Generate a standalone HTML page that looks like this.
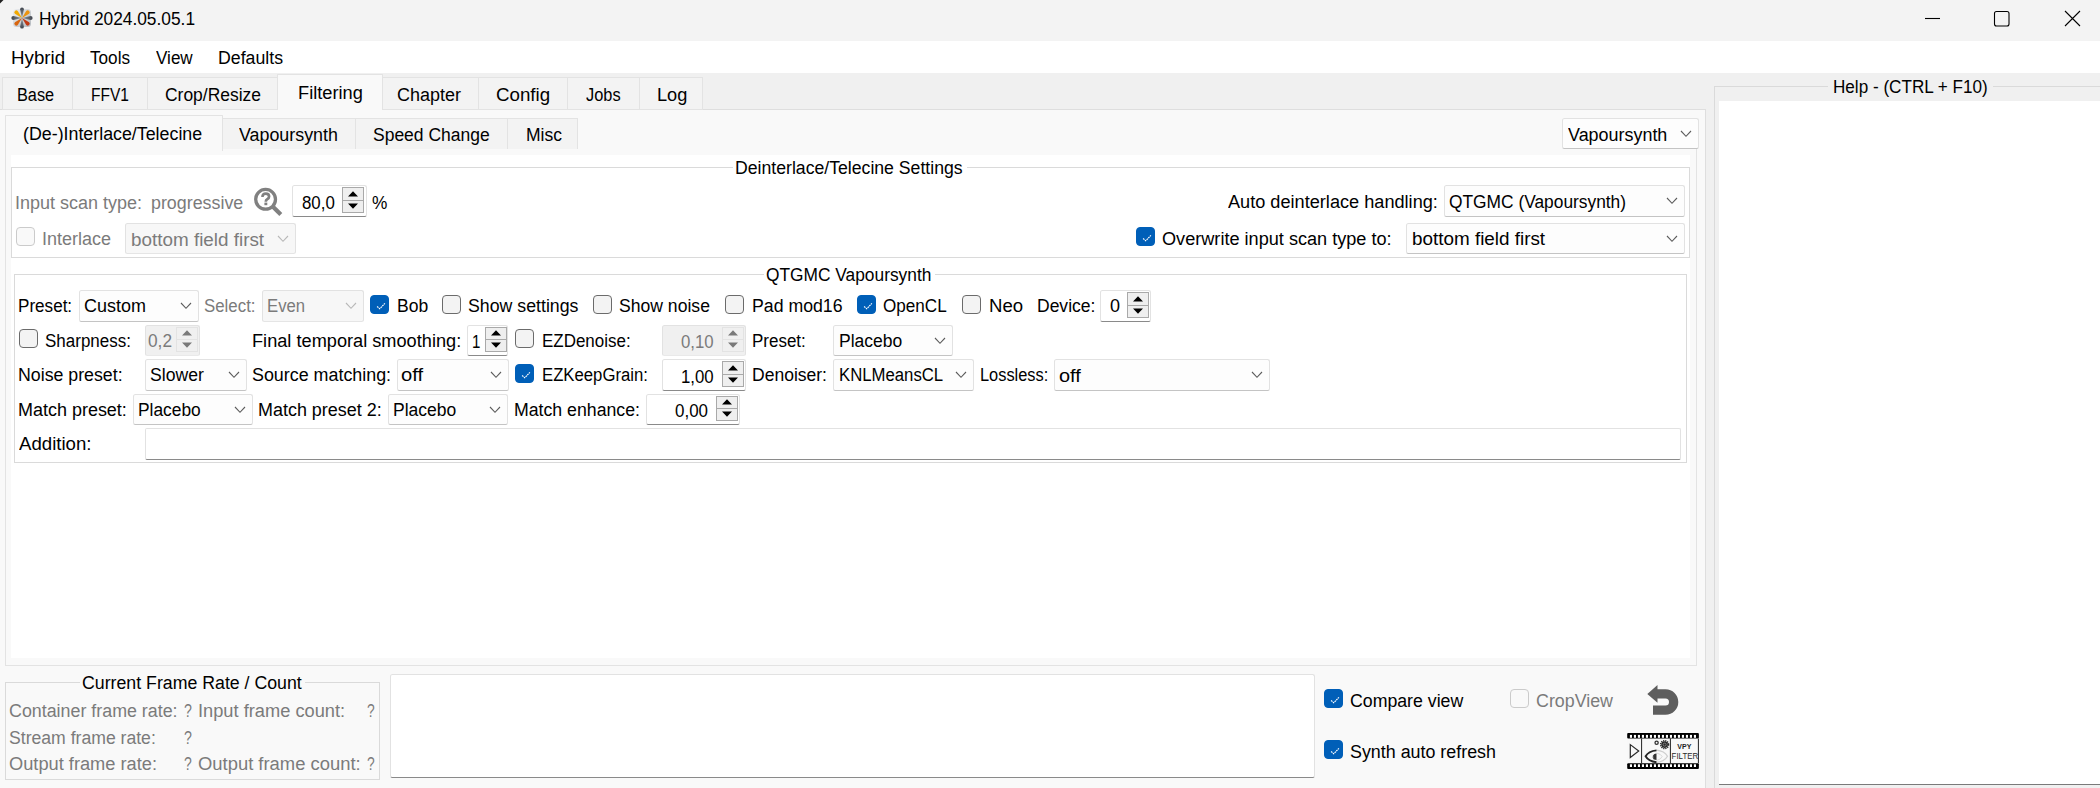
<!DOCTYPE html>
<html><head><meta charset="utf-8"><style>
html,body{margin:0;padding:0}
body{width:2100px;height:788px;overflow:hidden;position:relative;background:#f0f0f0;font-family:"Liberation Sans",sans-serif}
body>div,body>svg{position:absolute}
.t{white-space:nowrap;font-size:18px;line-height:20px;transform-origin:0 0}
.tab{box-sizing:border-box;background:#f3f3f3;border:1px solid #e3e3e3;border-bottom:none}
.tab.act{background:#f9f9f9;border-radius:1px 1px 0 0}
.cmb{box-sizing:border-box;border:1px solid #e2e2e2;border-radius:2.5px}
.cb{width:19px;height:19px;box-sizing:border-box;border:1px solid #6b6b6b;border-radius:4px;background:#f3f3f3}
.cb.on{background:#005fb8;border-color:#005fb8}
</style></head><body>
<div style="left:0px;top:0px;width:2100px;height:41px;background:#f3f3f3"></div>
<div style="left:0px;top:41px;width:2100px;height:32px;background:#ffffff"></div>
<svg style="position:absolute;left:1900px;top:0" width="200" height="41" viewBox="1900 0 200 41"><path d="M1925 18.5 H1940" stroke="#000" stroke-width="1.1"/><rect x="1994.5" y="11.5" width="14.5" height="14.5" rx="2" fill="none" stroke="#000" stroke-width="1.1"/><path d="M2065 11 L2080 26 M2080 11 L2065 26" stroke="#000" stroke-width="1.1"/></svg>
<svg style="position:absolute;left:10px;top:6px" width="24" height="24" viewBox="-12 -12 24 24"><defs><linearGradient id="sil" x1="0" y1="0" x2="1" y2="1"><stop offset="0" stop-color="#eceef0"/><stop offset="1" stop-color="#b4b9bf"/></linearGradient><linearGradient id="gp" x1="0" y1="1" x2="0" y2="0"><stop offset="0" stop-color="#9aa0a8"/><stop offset="1" stop-color="#3d424a"/></linearGradient></defs><rect x="-9" y="-9" width="18" height="18" rx="3.5" fill="url(#sil)"/><path d="M0 0 L-1.9 -8.7 A1.9 1.9 0 0 1 1.9 -8.7 Z" fill="url(#gp)" transform="rotate(0)"/><path d="M0 0 L-1.9 -8.7 A1.9 1.9 0 0 1 1.9 -8.7 Z" fill="url(#gp)" transform="rotate(90)"/><path d="M0 0 L-1.9 -8.7 A1.9 1.9 0 0 1 1.9 -8.7 Z" fill="url(#gp)" transform="rotate(180)"/><path d="M0 0 L-1.9 -8.7 A1.9 1.9 0 0 1 1.9 -8.7 Z" fill="url(#gp)" transform="rotate(270)"/><path d="M0 0 L-2.0 -8.0 A2.0 2.0 0 0 1 2.0 -8.0 Z" fill="#f2a900" transform="rotate(-45)"/><path d="M0 0 L-2.0 -8.0 A2.0 2.0 0 0 1 2.0 -8.0 Z" fill="#ec9410" transform="rotate(45)"/><path d="M0 0 L-2.0 -8.0 A2.0 2.0 0 0 1 2.0 -8.0 Z" fill="#d8650e" transform="rotate(-135)"/><path d="M0 0 L-2.0 -8.0 A2.0 2.0 0 0 1 2.0 -8.0 Z" fill="#c23a14" transform="rotate(135)"/></svg>
<svg style="position:absolute;left:0;top:0" width="5" height="5"><path d="M0 0 H3.5 L0 3.5 Z" fill="#222"/></svg>
<svg style="position:absolute;left:0;top:783px" width="5" height="5"><path d="M0 5 H3.5 L0 1.5 Z" fill="#444"/></svg>
<div style="left:-1px;top:109px;width:1707px;height:691px;background:#f9f9f9;border:1px solid #dedede;box-sizing:border-box"></div>
<div class="tab" style="left:2px;top:77px;width:71px;height:33px;border-bottom:1px solid #e3e3e3"></div>
<div class="tab" style="left:72px;top:77px;width:76px;height:33px;border-bottom:1px solid #e3e3e3"></div>
<div class="tab" style="left:147px;top:77px;width:131px;height:33px;border-bottom:1px solid #e3e3e3"></div>
<div class="tab" style="left:382px;top:77px;width:97px;height:33px;border-bottom:1px solid #e3e3e3"></div>
<div class="tab" style="left:478px;top:77px;width:90px;height:33px;border-bottom:1px solid #e3e3e3"></div>
<div class="tab" style="left:567px;top:77px;width:73px;height:33px;border-bottom:1px solid #e3e3e3"></div>
<div class="tab" style="left:639px;top:77px;width:64px;height:33px;border-bottom:1px solid #e3e3e3"></div>
<div class="tab act" style="left:277px;top:74px;width:106px;height:36px"></div>
<div style="left:1706px;top:73px;width:394px;height:715px;background:#f0f0f0"></div>
<div style="left:1714px;top:86px;width:396px;height:714px;box-sizing:border-box;border:1px solid #dadada;border-top:none;"></div>
<div style="left:1714px;top:86px;width:114px;height:1px;background:#dadada"></div>
<div style="left:1993px;top:86px;width:117px;height:1px;background:#dadada"></div>
<div style="left:1719px;top:101px;width:381px;height:684px;background:#ffffff;border-bottom:1px solid #7a7a7a;box-sizing:border-box"></div>
<div style="left:5px;top:149px;width:1692px;height:517px;background:#f9f9f9;border:1px solid #e3e3e3;border-top:none;box-sizing:border-box"></div>
<div class="tab" style="left:222px;top:118px;width:134px;height:31px"></div>
<div class="tab" style="left:355px;top:118px;width:153px;height:31px"></div>
<div class="tab" style="left:507px;top:118px;width:71px;height:31px"></div>
<div class="tab act" style="left:5px;top:115px;width:218px;height:36px"></div>
<div style="left:11px;top:155px;width:1679px;height:503px;background:#ffffff"></div>
<div class="cmb" style="left:1562px;top:118px;width:137px;height:31px;background:#fdfdfd;border-bottom-color:#c4c4c4"></div>
<svg width="12" height="8" viewBox="0 0 12 8" style="position:absolute;left:1679.5px;top:129.7px"><path d="M1 1 L6 6.3 L11 1" fill="none" stroke="#5c5c5c" stroke-width="1.1"/></svg>
<div style="left:11px;top:167px;width:1679px;height:91px;box-sizing:border-box;border:1px solid #dadada;border-top:none;"></div>
<div style="left:11px;top:167px;width:722px;height:1px;background:#dadada"></div>
<div style="left:967px;top:167px;width:723px;height:1px;background:#dadada"></div>
<div class="cmb" style="left:292px;top:185px;width:75px;height:32px;background:#ffffff;border-bottom-color:#8a8a8a"></div>
<div style="left:342px;top:187px;width:22px;height:26px;box-sizing:border-box;border:1px solid #a9a9a9;background:#efefef"></div>
<div style="left:342px;top:200.0px;width:22px;height:1px;background:#a9a9a9"></div>
<svg style="position:absolute;left:348.0px;top:191.0px" width="10" height="19" viewBox="0 0 10 19"><path d="M0 5.5 L5 0.2 L10 5.5 Z M0 12.5 L5 17.8 L10 12.5 Z" fill="#000"/></svg>
<svg style="position:absolute;left:252px;top:186px" width="32" height="32" viewBox="252 186 32 32"><circle cx="265.6" cy="199.3" r="9.9" fill="none" stroke="#808080" stroke-width="3.3"/><path d="M272.2 206 L280.8 214.6" stroke="#808080" stroke-width="4.2" stroke-linecap="butt"/><path d="M262.5 197 Q262.4 193.6 265.8 193.6 Q269.1 193.6 269.1 196.6 Q269.1 198.4 267.2 199.3 Q265.8 200 265.8 201.8" fill="none" stroke="#808080" stroke-width="2.7"/><rect x="264.4" y="202.6" width="2.9" height="2.6" fill="#808080"/></svg>
<div class="cb" style="left:16px;top:227px;width:19px;height:19px;border-color:#cbcbcb;background:#f9f9f9"></div>
<div class="cmb" style="left:125px;top:223px;width:171px;height:31px;background:#f7f7f7;border-bottom-color:#e5e5e5"></div>
<svg width="12" height="8" viewBox="0 0 12 8" style="position:absolute;left:276.5px;top:234.7px"><path d="M1 1 L6 6.3 L11 1" fill="none" stroke="#b8b8b8" stroke-width="1.1"/></svg>
<div class="cmb" style="left:1444px;top:185px;width:241px;height:32px;background:#fdfdfd;border-bottom-color:#c4c4c4"></div>
<svg width="12" height="8" viewBox="0 0 12 8" style="position:absolute;left:1665.5px;top:197.2px"><path d="M1 1 L6 6.3 L11 1" fill="none" stroke="#5c5c5c" stroke-width="1.1"/></svg>
<div class="cb on" style="left:1136px;top:227px;width:19px;height:19px"><svg width="19" height="19" viewBox="0 0 19 19" style="position:absolute;left:0;top:0"><path d="M6.1 10.5 L8.7 12.8 L13.9 7.3" fill="none" stroke="#fff" stroke-width="1.15" stroke-dasharray="1.8 0.6"/></svg></div>
<div class="cmb" style="left:1406px;top:223px;width:279px;height:31px;background:#fdfdfd;border-bottom-color:#c4c4c4"></div>
<svg width="12" height="8" viewBox="0 0 12 8" style="position:absolute;left:1665.5px;top:234.7px"><path d="M1 1 L6 6.3 L11 1" fill="none" stroke="#5c5c5c" stroke-width="1.1"/></svg>
<div style="left:14px;top:274px;width:1673px;height:189px;box-sizing:border-box;border:1px solid #dadada;border-top:none;"></div>
<div style="left:14px;top:274px;width:750px;height:1px;background:#dadada"></div>
<div style="left:935px;top:274px;width:752px;height:1px;background:#dadada"></div>
<div class="cmb" style="left:79px;top:290px;width:120px;height:32px;background:#fdfdfd;border-bottom-color:#c4c4c4"></div>
<svg width="12" height="8" viewBox="0 0 12 8" style="position:absolute;left:179.5px;top:302.2px"><path d="M1 1 L6 6.3 L11 1" fill="none" stroke="#5c5c5c" stroke-width="1.1"/></svg>
<div class="cmb" style="left:262px;top:290px;width:102px;height:32px;background:#f7f7f7;border-bottom-color:#e5e5e5"></div>
<svg width="12" height="8" viewBox="0 0 12 8" style="position:absolute;left:344.5px;top:302.2px"><path d="M1 1 L6 6.3 L11 1" fill="none" stroke="#b8b8b8" stroke-width="1.1"/></svg>
<div class="cb on" style="left:370px;top:295px;width:19px;height:19px"><svg width="19" height="19" viewBox="0 0 19 19" style="position:absolute;left:0;top:0"><path d="M6.1 10.5 L8.7 12.8 L13.9 7.3" fill="none" stroke="#fff" stroke-width="1.15" stroke-dasharray="1.8 0.6"/></svg></div>
<div class="cb" style="left:442px;top:295px;width:19px;height:19px;border-color:#6b6b6b;background:#f3f3f3"></div>
<div class="cb" style="left:593px;top:295px;width:19px;height:19px;border-color:#6b6b6b;background:#f3f3f3"></div>
<div class="cb" style="left:725px;top:295px;width:19px;height:19px;border-color:#6b6b6b;background:#f3f3f3"></div>
<div class="cb on" style="left:857px;top:295px;width:19px;height:19px"><svg width="19" height="19" viewBox="0 0 19 19" style="position:absolute;left:0;top:0"><path d="M6.1 10.5 L8.7 12.8 L13.9 7.3" fill="none" stroke="#fff" stroke-width="1.15" stroke-dasharray="1.8 0.6"/></svg></div>
<div class="cb" style="left:962px;top:295px;width:19px;height:19px;border-color:#6b6b6b;background:#f3f3f3"></div>
<div class="cmb" style="left:1100px;top:290px;width:51px;height:32px;background:#ffffff;border-bottom-color:#8a8a8a"></div>
<div style="left:1127px;top:292px;width:22px;height:26px;box-sizing:border-box;border:1px solid #a9a9a9;background:#efefef"></div>
<div style="left:1127px;top:305.0px;width:22px;height:1px;background:#a9a9a9"></div>
<svg style="position:absolute;left:1133.0px;top:296.0px" width="10" height="19" viewBox="0 0 10 19"><path d="M0 5.5 L5 0.2 L10 5.5 Z M0 12.5 L5 17.8 L10 12.5 Z" fill="#000"/></svg>
<div class="cb" style="left:19px;top:329px;width:19px;height:19px;border-color:#6b6b6b;background:#f3f3f3"></div>
<div class="cmb" style="left:145px;top:325px;width:55px;height:31px;background:#f0f0f0;border-bottom-color:#e9e9e9"></div>
<div style="left:176px;top:327px;width:22px;height:25px;box-sizing:border-box;border:1px solid #e3e3e3;background:#f0f0f0"></div>
<div style="left:176px;top:339.0px;width:22px;height:1px;background:#e3e3e3"></div>
<svg style="position:absolute;left:182.0px;top:330.0px" width="10" height="19" viewBox="0 0 10 19"><path d="M0 5.5 L5 0.2 L10 5.5 Z M0 12.5 L5 17.8 L10 12.5 Z" fill="#7a7a7a"/></svg>
<div class="cmb" style="left:467px;top:325px;width:41px;height:31px;background:#ffffff;border-bottom-color:#8a8a8a"></div>
<div style="left:485px;top:327px;width:22px;height:25px;box-sizing:border-box;border:1px solid #a9a9a9;background:#efefef"></div>
<div style="left:485px;top:339.0px;width:22px;height:1px;background:#a9a9a9"></div>
<svg style="position:absolute;left:491.0px;top:330.0px" width="10" height="19" viewBox="0 0 10 19"><path d="M0 5.5 L5 0.2 L10 5.5 Z M0 12.5 L5 17.8 L10 12.5 Z" fill="#000"/></svg>
<div class="cb" style="left:515px;top:329px;width:19px;height:19px;border-color:#6b6b6b;background:#f3f3f3"></div>
<div class="cmb" style="left:662px;top:325px;width:84px;height:31px;background:#f0f0f0;border-bottom-color:#e9e9e9"></div>
<div style="left:722px;top:327px;width:22px;height:25px;box-sizing:border-box;border:1px solid #e3e3e3;background:#f0f0f0"></div>
<div style="left:722px;top:339.0px;width:22px;height:1px;background:#e3e3e3"></div>
<svg style="position:absolute;left:728.0px;top:330.0px" width="10" height="19" viewBox="0 0 10 19"><path d="M0 5.5 L5 0.2 L10 5.5 Z M0 12.5 L5 17.8 L10 12.5 Z" fill="#7a7a7a"/></svg>
<div class="cmb" style="left:833px;top:325px;width:120px;height:31px;background:#fdfdfd;border-bottom-color:#c4c4c4"></div>
<svg width="12" height="8" viewBox="0 0 12 8" style="position:absolute;left:933.5px;top:336.7px"><path d="M1 1 L6 6.3 L11 1" fill="none" stroke="#5c5c5c" stroke-width="1.1"/></svg>
<div class="cmb" style="left:145px;top:359px;width:102px;height:32px;background:#fdfdfd;border-bottom-color:#c4c4c4"></div>
<svg width="12" height="8" viewBox="0 0 12 8" style="position:absolute;left:227.5px;top:371.2px"><path d="M1 1 L6 6.3 L11 1" fill="none" stroke="#5c5c5c" stroke-width="1.1"/></svg>
<div class="cmb" style="left:397px;top:359px;width:112px;height:32px;background:#fdfdfd;border-bottom-color:#c4c4c4"></div>
<svg width="12" height="8" viewBox="0 0 12 8" style="position:absolute;left:489.5px;top:371.2px"><path d="M1 1 L6 6.3 L11 1" fill="none" stroke="#5c5c5c" stroke-width="1.1"/></svg>
<div class="cb on" style="left:515px;top:364px;width:19px;height:19px"><svg width="19" height="19" viewBox="0 0 19 19" style="position:absolute;left:0;top:0"><path d="M6.1 10.5 L8.7 12.8 L13.9 7.3" fill="none" stroke="#fff" stroke-width="1.15" stroke-dasharray="1.8 0.6"/></svg></div>
<div class="cmb" style="left:662px;top:359px;width:84px;height:32px;background:#ffffff;border-bottom-color:#8a8a8a"></div>
<div style="left:722px;top:361px;width:22px;height:26px;box-sizing:border-box;border:1px solid #a9a9a9;background:#efefef"></div>
<div style="left:722px;top:374.0px;width:22px;height:1px;background:#a9a9a9"></div>
<svg style="position:absolute;left:728.0px;top:365.0px" width="10" height="19" viewBox="0 0 10 19"><path d="M0 5.5 L5 0.2 L10 5.5 Z M0 12.5 L5 17.8 L10 12.5 Z" fill="#000"/></svg>
<div class="cmb" style="left:833px;top:359px;width:141px;height:32px;background:#fdfdfd;border-bottom-color:#c4c4c4"></div>
<svg width="12" height="8" viewBox="0 0 12 8" style="position:absolute;left:954.5px;top:371.2px"><path d="M1 1 L6 6.3 L11 1" fill="none" stroke="#5c5c5c" stroke-width="1.1"/></svg>
<div class="cmb" style="left:1054px;top:359px;width:216px;height:32px;background:#fdfdfd;border-bottom-color:#c4c4c4"></div>
<svg width="12" height="8" viewBox="0 0 12 8" style="position:absolute;left:1250.5px;top:371.2px"><path d="M1 1 L6 6.3 L11 1" fill="none" stroke="#5c5c5c" stroke-width="1.1"/></svg>
<div class="cmb" style="left:133px;top:394px;width:120px;height:31px;background:#fdfdfd;border-bottom-color:#c4c4c4"></div>
<svg width="12" height="8" viewBox="0 0 12 8" style="position:absolute;left:233.5px;top:405.7px"><path d="M1 1 L6 6.3 L11 1" fill="none" stroke="#5c5c5c" stroke-width="1.1"/></svg>
<div class="cmb" style="left:388px;top:394px;width:120px;height:31px;background:#fdfdfd;border-bottom-color:#c4c4c4"></div>
<svg width="12" height="8" viewBox="0 0 12 8" style="position:absolute;left:488.5px;top:405.7px"><path d="M1 1 L6 6.3 L11 1" fill="none" stroke="#5c5c5c" stroke-width="1.1"/></svg>
<div class="cmb" style="left:646px;top:394px;width:94px;height:31px;background:#ffffff;border-bottom-color:#8a8a8a"></div>
<div style="left:716px;top:396px;width:22px;height:25px;box-sizing:border-box;border:1px solid #a9a9a9;background:#efefef"></div>
<div style="left:716px;top:408.0px;width:22px;height:1px;background:#a9a9a9"></div>
<svg style="position:absolute;left:722.0px;top:399.0px" width="10" height="19" viewBox="0 0 10 19"><path d="M0 5.5 L5 0.2 L10 5.5 Z M0 12.5 L5 17.8 L10 12.5 Z" fill="#000"/></svg>
<div class="cmb" style="left:145px;top:428px;width:1536px;height:32px;background:#fff;border-bottom-color:#8a8a8a;border-radius:2px"></div>
<div style="left:5px;top:682px;width:375px;height:98px;box-sizing:border-box;border:1px solid #dadada;border-top:none;"></div>
<div style="left:5px;top:682px;width:75px;height:1px;background:#dadada"></div>
<div style="left:305px;top:682px;width:75px;height:1px;background:#dadada"></div>
<div class="cmb" style="left:390px;top:674px;width:925px;height:104px;background:#fff;border-bottom-color:#8a8a8a"></div>
<div class="cb on" style="left:1324px;top:689px;width:19px;height:19px"><svg width="19" height="19" viewBox="0 0 19 19" style="position:absolute;left:0;top:0"><path d="M6.1 10.5 L8.7 12.8 L13.9 7.3" fill="none" stroke="#fff" stroke-width="1.15" stroke-dasharray="1.8 0.6"/></svg></div>
<div class="cb" style="left:1510px;top:689px;width:19px;height:19px;border-color:#cbcbcb;background:#f9f9f9"></div>
<div class="cb on" style="left:1324px;top:740px;width:19px;height:19px"><svg width="19" height="19" viewBox="0 0 19 19" style="position:absolute;left:0;top:0"><path d="M6.1 10.5 L8.7 12.8 L13.9 7.3" fill="none" stroke="#fff" stroke-width="1.15" stroke-dasharray="1.8 0.6"/></svg></div>
<svg style="position:absolute;left:1640px;top:680px" width="45" height="40" viewBox="1640 680 45 40"><path d="M1647.3 694 L1657.5 685 L1657.5 689.2 L1665.5 689.2 A12.8 12.8 0 0 1 1665.5 714.8 L1653 714.8 L1653 705.5 L1665.5 705.5 A3.5 3.5 0 0 0 1665.5 698.5 L1657.5 698.5 L1657.5 702.8 Z" fill="#5e5e5e"/></svg>
<svg style="position:absolute;left:1626px;top:732px" width="74" height="38" viewBox="0 0 74 38"><rect x="1.2" y="6.5" width="71.5" height="24.8" fill="#f8f8f8"/><rect x="1.2" y="0.9" width="71.7" height="5.6" rx="1" fill="#000"/><rect x="1.2" y="31.3" width="71.7" height="5.6" rx="1" fill="#000"/><rect x="3.9" y="2.9" width="2.1" height="2.9" fill="#fff"/><rect x="3.9" y="32.3" width="2.1" height="2.7" fill="#fff"/><rect x="7.9" y="2.9" width="2.1" height="2.9" fill="#fff"/><rect x="7.9" y="32.3" width="2.1" height="2.7" fill="#fff"/><rect x="11.9" y="2.9" width="2.1" height="2.9" fill="#fff"/><rect x="11.9" y="32.3" width="2.1" height="2.7" fill="#fff"/><rect x="15.9" y="2.9" width="2.1" height="2.9" fill="#fff"/><rect x="15.9" y="32.3" width="2.1" height="2.7" fill="#fff"/><rect x="19.9" y="2.9" width="2.1" height="2.9" fill="#fff"/><rect x="19.9" y="32.3" width="2.1" height="2.7" fill="#fff"/><rect x="23.9" y="2.9" width="2.1" height="2.9" fill="#fff"/><rect x="23.9" y="32.3" width="2.1" height="2.7" fill="#fff"/><rect x="27.9" y="2.9" width="2.1" height="2.9" fill="#fff"/><rect x="27.9" y="32.3" width="2.1" height="2.7" fill="#fff"/><rect x="31.9" y="2.9" width="2.1" height="2.9" fill="#fff"/><rect x="31.9" y="32.3" width="2.1" height="2.7" fill="#fff"/><rect x="35.9" y="2.9" width="2.1" height="2.9" fill="#fff"/><rect x="35.9" y="32.3" width="2.1" height="2.7" fill="#fff"/><rect x="39.9" y="2.9" width="2.1" height="2.9" fill="#fff"/><rect x="39.9" y="32.3" width="2.1" height="2.7" fill="#fff"/><rect x="43.9" y="2.9" width="2.1" height="2.9" fill="#fff"/><rect x="43.9" y="32.3" width="2.1" height="2.7" fill="#fff"/><rect x="47.9" y="2.9" width="2.1" height="2.9" fill="#fff"/><rect x="47.9" y="32.3" width="2.1" height="2.7" fill="#fff"/><rect x="51.9" y="2.9" width="2.1" height="2.9" fill="#fff"/><rect x="51.9" y="32.3" width="2.1" height="2.7" fill="#fff"/><rect x="55.9" y="2.9" width="2.1" height="2.9" fill="#fff"/><rect x="55.9" y="32.3" width="2.1" height="2.7" fill="#fff"/><rect x="59.9" y="2.9" width="2.1" height="2.9" fill="#fff"/><rect x="59.9" y="32.3" width="2.1" height="2.7" fill="#fff"/><rect x="63.9" y="2.9" width="2.1" height="2.9" fill="#fff"/><rect x="63.9" y="32.3" width="2.1" height="2.7" fill="#fff"/><rect x="67.9" y="2.9" width="2.1" height="2.9" fill="#fff"/><rect x="67.9" y="32.3" width="2.1" height="2.7" fill="#fff"/><path d="M15.6 6.5 V31.3 M44.4 6.5 V31.3 M72.4 6.5 V31.3" stroke="#222" stroke-width="1"/><path d="M4.3 12.6 L12.7 19.1 L4.3 25.5 Z" fill="none" stroke="#2a2a2a" stroke-width="1.2"/><path d="M30.5 18.2 Q38.5 19 41.5 24.3 Q38.5 29.6 30.5 30.4" fill="none" stroke="#cfcfcf" stroke-width="1.3"/><path d="M30.5 21 Q35 22 36.2 24.5 Q35 27.5 30.5 28.5" fill="none" stroke="#d8d8d8" stroke-width="1"/><path d="M30.5 18.4 Q22.5 19.2 19.6 24.3 Q22.5 29.4 30.5 30.2" fill="none" stroke="#262626" stroke-width="1.9"/><path d="M30.5 21.5 A3.3 3.3 0 0 0 30.5 28.1 Z" fill="#333"/><path d="M27.5 23 Q26.5 25.5 28 27.5" fill="none" stroke="#444" stroke-width="0.8"/><circle cx="38.6" cy="12.6" r="3.9" fill="none" stroke="#2a2a2a" stroke-width="1.6" stroke-dasharray="1.2 0.85"/><circle cx="38.6" cy="12.6" r="3.3" fill="#2a2a2a"/><circle cx="38.6" cy="12.6" r="1.5" fill="none" stroke="#9a9a9a" stroke-width="0.7"/><circle cx="30.6" cy="10.8" r="1.6" fill="none" stroke="#303030" stroke-width="1.3"/><text x="58.3" y="16.9" font-family="Liberation Sans" font-weight="bold" font-size="7.6" text-anchor="middle" fill="#222" textLength="14" lengthAdjust="spacingAndGlyphs">VPY</text><text x="45.6" y="26.8" font-family="Liberation Sans" font-size="8.2" fill="#2a2a2a" textLength="26.6" lengthAdjust="spacingAndGlyphs">FILTER</text></svg>
<div class="t" style="left:39.04px;top:9px;color:#000000;transform:scaleX(0.9625)">Hybrid 2024.05.05.1</div>
<div class="t" style="left:10.96px;top:48px;color:#000000;transform:scaleX(1.0400)">Hybrid</div>
<div class="t" style="left:90.00px;top:48px;color:#000000;transform:scaleX(0.9524)">Tools</div>
<div class="t" style="left:156.00px;top:48px;color:#000000;transform:scaleX(0.9487)">View</div>
<div class="t" style="left:218.02px;top:48px;color:#000000;transform:scaleX(0.9846)">Defaults</div>
<div class="t" style="left:17.39px;top:85px;color:#000000;transform:scaleX(0.9051)">Base</div>
<div class="t" style="left:90.54px;top:85px;color:#000000;transform:scaleX(0.8619)">FFV1</div>
<div class="t" style="left:165.43px;top:85px;color:#000000;transform:scaleX(0.9691)">Crop/Resize</div>
<div class="t" style="left:297.59px;top:83px;color:#000000;transform:scaleX(1.0129)">Filtering</div>
<div class="t" style="left:397.10px;top:85px;color:#000000;transform:scaleX(0.9984)">Chapter</div>
<div class="t" style="left:495.76px;top:85px;color:#000000;transform:scaleX(1.0400)">Config</div>
<div class="t" style="left:585.90px;top:85px;color:#000000;transform:scaleX(0.9105)">Jobs</div>
<div class="t" style="left:657.19px;top:85px;color:#000000;transform:scaleX(1.0107)">Log</div>
<div class="t" style="left:23.01px;top:124px;color:#000000;transform:scaleX(0.9894)">(De-)Interlace/Telecine</div>
<div class="t" style="left:238.50px;top:125px;color:#000000;transform:scaleX(0.9919)">Vapoursynth</div>
<div class="t" style="left:373.33px;top:125px;color:#000000;transform:scaleX(0.9712)">Speed Change</div>
<div class="t" style="left:525.83px;top:125px;color:#000000;transform:scaleX(0.9722)">Misc</div>
<div class="t" style="left:1567.90px;top:125px;color:#000000;transform:scaleX(0.9960)">Vapoursynth</div>
<div class="t" style="left:735.42px;top:158px;color:#000000;transform:scaleX(0.9805)">Deinterlace/Telecine Settings</div>
<div class="t" style="left:15.00px;top:193px;color:#7b7b7b;transform:scaleX(1.0000)">Input scan type:</div>
<div class="t" style="left:151.41px;top:193px;color:#7b7b7b;transform:scaleX(0.9912)">progressive</div>
<div class="t" style="left:301.56px;top:193px;color:#000000;transform:scaleX(0.9353)">80,0</div>
<div class="t" style="left:371.84px;top:193px;color:#000000;transform:scaleX(0.9600)">%</div>
<div class="t" style="left:42.00px;top:229px;color:#7b7b7b;transform:scaleX(1.0000)">Interlace</div>
<div class="t" style="left:130.95px;top:230px;color:#7b7b7b;transform:scaleX(1.0476)">bottom field first</div>
<div class="t" style="left:1228.00px;top:192px;color:#000000;transform:scaleX(1.0082)">Auto deinterlace handling:</div>
<div class="t" style="left:1448.64px;top:192px;color:#000000;transform:scaleX(0.9637)">QTGMC (Vapoursynth)</div>
<div class="t" style="left:1162.49px;top:229px;color:#000000;transform:scaleX(1.0066)">Overwrite input scan type to:</div>
<div class="t" style="left:1411.75px;top:229px;color:#000000;transform:scaleX(1.0476)">bottom field first</div>
<div class="t" style="left:766.34px;top:265px;color:#000000;transform:scaleX(0.9629)">QTGMC Vapoursynth</div>
<div class="t" style="left:18.25px;top:296px;color:#000000;transform:scaleX(0.9491)">Preset:</div>
<div class="t" style="left:83.80px;top:296px;color:#000000;transform:scaleX(0.9983)">Custom</div>
<div class="t" style="left:204.26px;top:296px;color:#7b7b7b;transform:scaleX(0.9358)">Select:</div>
<div class="t" style="left:267.17px;top:296px;color:#7b7b7b;transform:scaleX(0.9282)">Even</div>
<div class="t" style="left:396.73px;top:296px;color:#000000;transform:scaleX(0.9733)">Bob</div>
<div class="t" style="left:467.91px;top:296px;color:#000000;transform:scaleX(0.9856)">Show settings</div>
<div class="t" style="left:619.42px;top:296px;color:#000000;transform:scaleX(0.9769)">Show noise</div>
<div class="t" style="left:751.72px;top:296px;color:#000000;transform:scaleX(0.9833)">Pad mod16</div>
<div class="t" style="left:883.35px;top:296px;color:#000000;transform:scaleX(0.9500)">OpenCL</div>
<div class="t" style="left:988.77px;top:296px;color:#000000;transform:scaleX(1.0323)">Neo</div>
<div class="t" style="left:1036.53px;top:296px;color:#000000;transform:scaleX(0.9724)">Device:</div>
<div class="t" style="left:1110.00px;top:296px;color:#000000;transform:scaleX(1.0000)">0</div>
<div class="t" style="left:44.86px;top:331px;color:#000000;transform:scaleX(0.9438)">Sharpness:</div>
<div class="t" style="left:148.34px;top:331px;color:#7b7b7b;transform:scaleX(0.9609)">0,2</div>
<div class="t" style="left:252.19px;top:331px;color:#000000;transform:scaleX(1.0102)">Final temporal smoothing:</div>
<div class="t" style="left:472.16px;top:332px;color:#000000;transform:scaleX(0.8375)">1</div>
<div class="t" style="left:541.66px;top:331px;color:#000000;transform:scaleX(0.9424)">EZDenoise:</div>
<div class="t" style="left:681.07px;top:332px;color:#7b7b7b;transform:scaleX(0.9324)">0,10</div>
<div class="t" style="left:751.76px;top:331px;color:#000000;transform:scaleX(0.9436)">Preset:</div>
<div class="t" style="left:838.83px;top:331px;color:#000000;transform:scaleX(0.9730)">Placebo</div>
<div class="t" style="left:18.21px;top:365px;color:#000000;transform:scaleX(0.9865)">Noise preset:</div>
<div class="t" style="left:149.62px;top:365px;color:#000000;transform:scaleX(0.9778)">Slower</div>
<div class="t" style="left:251.71px;top:365px;color:#000000;transform:scaleX(0.9928)">Source matching:</div>
<div class="t" style="left:401.38px;top:365px;color:#000000;transform:scaleX(1.1211)">off</div>
<div class="t" style="left:541.67px;top:365px;color:#000000;transform:scaleX(0.9286)">EZKeepGrain:</div>
<div class="t" style="left:681.07px;top:367px;color:#000000;transform:scaleX(0.9324)">1,00</div>
<div class="t" style="left:751.73px;top:365px;color:#000000;transform:scaleX(0.9733)">Denoiser:</div>
<div class="t" style="left:838.87px;top:365px;color:#000000;transform:scaleX(0.9297)">KNLMeansCL</div>
<div class="t" style="left:979.69px;top:365px;color:#000000;transform:scaleX(0.9096)">Lossless:</div>
<div class="t" style="left:1058.89px;top:366px;color:#000000;transform:scaleX(1.1053)">off</div>
<div class="t" style="left:18.20px;top:400px;color:#000000;transform:scaleX(0.9981)">Match preset:</div>
<div class="t" style="left:138.13px;top:400px;color:#000000;transform:scaleX(0.9651)">Placebo</div>
<div class="t" style="left:258.00px;top:400px;color:#000000;transform:scaleX(0.9967)">Match preset 2:</div>
<div class="t" style="left:392.93px;top:400px;color:#000000;transform:scaleX(0.9730)">Placebo</div>
<div class="t" style="left:513.72px;top:400px;color:#000000;transform:scaleX(0.9833)">Match enhance:</div>
<div class="t" style="left:674.96px;top:401px;color:#000000;transform:scaleX(0.9412)">0,00</div>
<div class="t" style="left:19.20px;top:434px;color:#000000;transform:scaleX(1.0348)">Addition:</div>
<div class="t" style="left:82.01px;top:673px;color:#000000;transform:scaleX(0.9851)">Current Frame Rate / Count</div>
<div class="t" style="left:9.01px;top:701px;color:#7b7b7b;transform:scaleX(0.9911)">Container frame rate:</div>
<div class="t" style="left:184.01px;top:701px;color:#7b7b7b;transform:scaleX(0.7889)">?</div>
<div class="t" style="left:198.39px;top:701px;color:#7b7b7b;transform:scaleX(1.0140)">Input frame count:</div>
<div class="t" style="left:367.03px;top:701px;color:#7b7b7b;transform:scaleX(0.7667)">?</div>
<div class="t" style="left:9.02px;top:728px;color:#7b7b7b;transform:scaleX(0.9784)">Stream frame rate:</div>
<div class="t" style="left:184.01px;top:728px;color:#7b7b7b;transform:scaleX(0.7889)">?</div>
<div class="t" style="left:8.99px;top:754px;color:#7b7b7b;transform:scaleX(1.0132)">Output frame rate:</div>
<div class="t" style="left:183.72px;top:754px;color:#7b7b7b;transform:scaleX(0.7778)">?</div>
<div class="t" style="left:197.78px;top:754px;color:#7b7b7b;transform:scaleX(1.0223)">Output frame count:</div>
<div class="t" style="left:367.03px;top:754px;color:#7b7b7b;transform:scaleX(0.7667)">?</div>
<div class="t" style="left:1349.82px;top:691px;color:#000000;transform:scaleX(0.9842)">Compare view</div>
<div class="t" style="left:1535.71px;top:691px;color:#7b7b7b;transform:scaleX(0.9909)">CropView</div>
<div class="t" style="left:1349.81px;top:742px;color:#000000;transform:scaleX(0.9924)">Synth auto refresh</div>
<div class="t" style="left:1833.05px;top:77px;color:#000000;transform:scaleX(0.9503)">Help - (CTRL + F10)</div>
</body></html>
